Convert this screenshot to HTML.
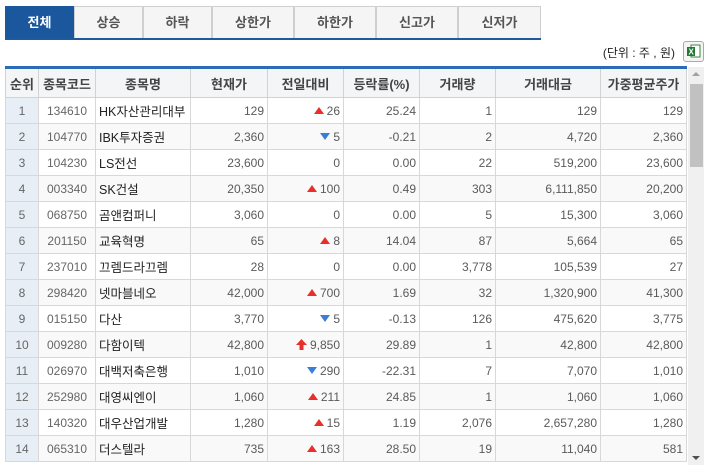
<!DOCTYPE html>
<html><head><meta charset="utf-8"><style>
*{margin:0;padding:0;box-sizing:border-box}
body{width:708px;height:473px;background:#fff;font-family:"Liberation Sans","Noto Sans CJK KR",sans-serif;font-size:12px;color:#333;position:relative;overflow:hidden}
.tabs{position:absolute;left:5px;top:6px;height:34px;width:536px;border-bottom:2px solid #1d5aa0}
.tab{position:absolute;top:0;height:32px;background:#f5f5f5;border:1px solid #cfcfcf;border-bottom:none;text-align:center;line-height:32px;font-size:13px;color:#555;font-weight:bold}
.tab.on{background:#1b579d;color:#fff;border-color:#1b579d}
.unit{position:absolute;right:33px;top:44px;font-size:12px;color:#222}
.xl{position:absolute;left:683px;top:41px;width:21px;height:21px;border:1px solid #aaa;border-radius:3px;background:#f4f4f4}
table{position:absolute;left:5px;top:66px;border-collapse:collapse;border-top:3px solid #2a6cb8;table-layout:fixed;width:681px}
th{height:30px;background:#f4f5f7;border:1px solid #d2d2d2;font-weight:bold;color:#444;font-size:13px;border-top:none}
td{height:26px;border:1px solid #d8d8d8;color:#5a5a5a;font-size:12px;padding:0 3px;text-align:right;white-space:nowrap;overflow:hidden}
td.c1{background:#e8eef6;text-align:center;color:#666}
td.c2{text-align:center;color:#666}
td.nm{text-align:left;color:#222;font-size:12.5px}
tr.e td{background:#f9f9f9}
tr.e td.c1{background:#e8eef6}
.u,.d{display:inline-block;width:0;height:0;border-left:5px solid transparent;border-right:5px solid transparent;margin-right:3px;vertical-align:1px}
.u{border-bottom:7px solid #e8302a}
.d{border-top:7px solid #3a7fd5}
.sb{position:absolute;left:688px;top:67px;width:16px;height:398px;background:#f0f0f0}
.th{position:absolute;left:690px;top:84px;width:13px;height:83px;background:#c1c1c1}
</style></head><body>
<div class="tabs">
<div class="tab on" style="left:0;width:69px">전체</div>
<div class="tab" style="left:69px;width:69px">상승</div>
<div class="tab" style="left:138px;width:69px">하락</div>
<div class="tab" style="left:207px;width:82px">상한가</div>
<div class="tab" style="left:289px;width:82px">하한가</div>
<div class="tab" style="left:371px;width:82px">신고가</div>
<div class="tab" style="left:453px;width:83px">신저가</div>
</div>
<div class="unit">(단위 : 주 , 원)</div>
<div class="xl"><svg width="19" height="19" viewBox="0 0 19 19"><rect x="7" y="3" width="9" height="12" fill="#fff" stroke="#3a8a3a"/><rect x="3" y="5" width="8" height="9" fill="#1e7a32"/><text x="4.5" y="12.5" font-size="8" fill="#fff" font-weight="bold" font-family="Liberation Sans">X</text></svg></div>
<table>
<colgroup><col style="width:33px"><col style="width:57px"><col style="width:95px"><col style="width:77px"><col style="width:76px"><col style="width:76px"><col style="width:76px"><col style="width:105px"><col style="width:86px"></colgroup>
<tr><th>순위</th><th>종목코드</th><th>종목명</th><th>현재가</th><th>전일대비</th><th>등락률(%)</th><th>거래량</th><th>거래대금</th><th>가중평균주가</th></tr>
<tr><td class="c1">1</td><td class="c2">134610</td><td class="nm">HK자산관리대부</td><td>129</td><td><span class="u"></span>26</td><td>25.24</td><td>1</td><td>129</td><td>129</td></tr>
<tr class="e"><td class="c1">2</td><td class="c2">104770</td><td class="nm">IBK투자증권</td><td>2,360</td><td><span class="d"></span>5</td><td>-0.21</td><td>2</td><td>4,720</td><td>2,360</td></tr>
<tr><td class="c1">3</td><td class="c2">104230</td><td class="nm">LS전선</td><td>23,600</td><td>0</td><td>0.00</td><td>22</td><td>519,200</td><td>23,600</td></tr>
<tr class="e"><td class="c1">4</td><td class="c2">003340</td><td class="nm">SK건설</td><td>20,350</td><td><span class="u"></span>100</td><td>0.49</td><td>303</td><td>6,111,850</td><td>20,200</td></tr>
<tr><td class="c1">5</td><td class="c2">068750</td><td class="nm">곰앤컴퍼니</td><td>3,060</td><td>0</td><td>0.00</td><td>5</td><td>15,300</td><td>3,060</td></tr>
<tr class="e"><td class="c1">6</td><td class="c2">201150</td><td class="nm">교육혁명</td><td>65</td><td><span class="u"></span>8</td><td>14.04</td><td>87</td><td>5,664</td><td>65</td></tr>
<tr><td class="c1">7</td><td class="c2">237010</td><td class="nm">끄렘드라끄렘</td><td>28</td><td>0</td><td>0.00</td><td>3,778</td><td>105,539</td><td>27</td></tr>
<tr class="e"><td class="c1">8</td><td class="c2">298420</td><td class="nm">넷마블네오</td><td>42,000</td><td><span class="u"></span>700</td><td>1.69</td><td>32</td><td>1,320,900</td><td>41,300</td></tr>
<tr><td class="c1">9</td><td class="c2">015150</td><td class="nm">다산</td><td>3,770</td><td><span class="d"></span>5</td><td>-0.13</td><td>126</td><td>475,620</td><td>3,775</td></tr>
<tr class="e"><td class="c1">10</td><td class="c2">009280</td><td class="nm">다함이텍</td><td>42,800</td><td><svg width="11" height="11" viewBox="0 0 11 11" style="vertical-align:-1px;margin-right:3px"><path d="M5.5 0 L11 6 L7.5 6 L7.5 11 L3.5 11 L3.5 6 L0 6Z" fill="#e8302a"/></svg>9,850</td><td>29.89</td><td>1</td><td>42,800</td><td>42,800</td></tr>
<tr><td class="c1">11</td><td class="c2">026970</td><td class="nm">대백저축은행</td><td>1,010</td><td><span class="d"></span>290</td><td>-22.31</td><td>7</td><td>7,070</td><td>1,010</td></tr>
<tr class="e"><td class="c1">12</td><td class="c2">252980</td><td class="nm">대영씨엔이</td><td>1,060</td><td><span class="u"></span>211</td><td>24.85</td><td>1</td><td>1,060</td><td>1,060</td></tr>
<tr><td class="c1">13</td><td class="c2">140320</td><td class="nm">대우산업개발</td><td>1,280</td><td><span class="u"></span>15</td><td>1.19</td><td>2,076</td><td>2,657,280</td><td>1,280</td></tr>
<tr class="e"><td class="c1">14</td><td class="c2">065310</td><td class="nm">더스텔라</td><td>735</td><td><span class="u"></span>163</td><td>28.50</td><td>19</td><td>11,040</td><td>581</td></tr>
</table>
<div class="sb"></div><div class="th"></div>
<div style="position:absolute;left:692px;top:72px;width:0;height:0;border-left:4px solid transparent;border-right:4px solid transparent;border-bottom:4px solid #a0a0a0"></div>
<div style="position:absolute;left:692px;top:456px;width:0;height:0;border-left:4px solid transparent;border-right:4px solid transparent;border-top:4px solid #505050"></div>
</body></html>
